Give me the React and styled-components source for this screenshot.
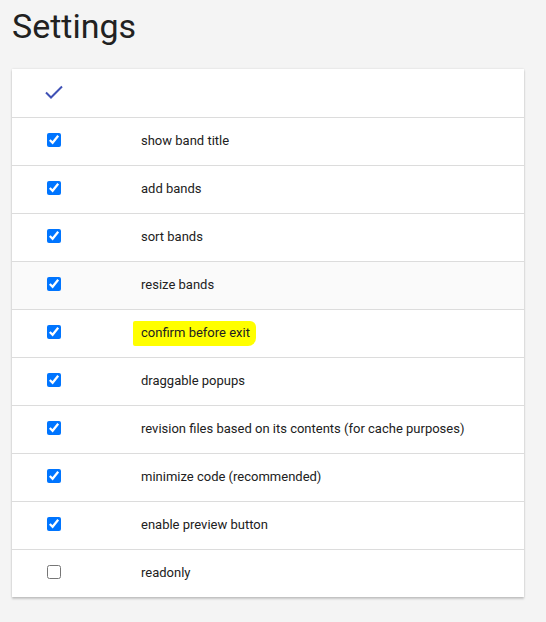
import React, { useState } from "react";
import styled, { createGlobalStyle } from "styled-components";

const GlobalStyle = createGlobalStyle`
  html, body {
    margin: 0;
    padding: 0;
    background: #f4f4f4;
    font-family: Roboto, "Liberation Sans", sans-serif;
  }
`;

const Page = styled.div`
  padding: 0 22px 24px 12px;
`;

const Title = styled.h1`
  font-size: 34px;
  font-weight: 400;
  color: #212121;
  margin: 0;
  padding-top: 4px;
  height: 65px;
  line-height: 44px;
`;

const Card = styled.div`
  background: #fff;
  box-shadow: 0 2px 2px rgba(0, 0, 0, 0.18), 0 0 2px rgba(0, 0, 0, 0.12);
`;

const Row = styled.label`
  display: grid;
  grid-template-columns: 129px 1fr;
  align-items: center;
  height: 48px;
  padding-bottom: 3px;
  box-sizing: border-box;
  border-top: ${(p) => (p.$first ? "none" : "1px solid #dcdcdc")};
  background: ${(p) => (p.$hover ? "#fafafa" : "#fff")};
  font-size: 13px;
  color: #212121;
`;

const CheckCell = styled.div`
  display: flex;
  justify-content: center;
  width: 84px;
`;

const Box = styled.input`
  width: 14px;
  height: 14px;
  margin: 0;
`;

const Highlight = styled.span`
  background: #ffff00;
  padding: 4px 6px 6px 8px;
  margin-left: -8px;
  border-radius: 2px 6px 8px 2px;
`;

const items = [
  { label: "show band title", on: true },
  { label: "add bands", on: true },
  { label: "sort bands", on: true },
  { label: "resize bands", on: true, hover: true },
  { label: "confirm before exit", on: true, mark: true },
  { label: "draggable popups", on: true },
  { label: "revision files based on its contents (for cache purposes)", on: true },
  { label: "minimize code (recommended)", on: true },
  { label: "enable preview button", on: true },
  { label: "readonly", on: false },
];

export default function App() {
  const [values, setValues] = useState(items.map((i) => i.on));
  return (
    <Page>
      <GlobalStyle />
      <Title>Settings</Title>
      <Card>
        <Row as="div" $first>
          <CheckCell>
            <svg width="20" height="16" viewBox="0 0 20 16">
              <path d="M2 8.5 L7 13.5 L18 2.5" fill="none" stroke="#3f51b5" strokeWidth="2" />
            </svg>
          </CheckCell>
          <span />
        </Row>
        {items.map((item, i) => (
          <Row key={item.label} $hover={item.hover}>
            <CheckCell>
              <Box
                type="checkbox"
                checked={values[i]}
                onChange={() => setValues(values.map((v, j) => (j === i ? !v : v)))}
              />
            </CheckCell>
            <span>{item.mark ? <Highlight>{item.label}</Highlight> : item.label}</span>
          </Row>
        ))}
      </Card>
    </Page>
  );
}
